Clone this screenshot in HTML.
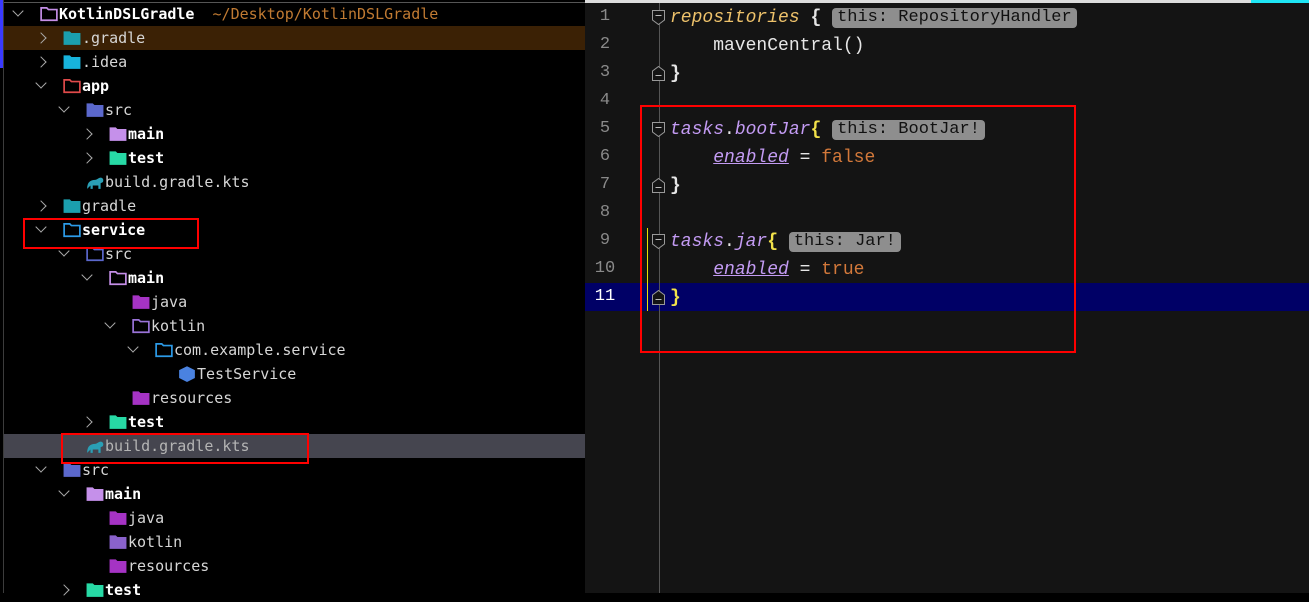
<!DOCTYPE html>
<html><head><meta charset="utf-8"><style>
*{margin:0;padding:0;box-sizing:border-box}
body{width:1309px;height:593px;overflow:hidden;background:#000;position:relative;font-family:"DejaVu Sans Mono","Liberation Mono",monospace}
.row{position:absolute;left:4px;width:581px;height:24px;font-size:15px;line-height:24px;color:#d6d6d6;white-space:nowrap}
.row .t{position:absolute;top:0}
.row b{font-weight:bold;color:#fff}
.chev{position:absolute;top:8px;width:8px;height:8px;border-right:1.7px solid #aaa;border-bottom:1.7px solid #aaa}
.chev.d{transform:rotate(45deg);top:5px}
.chev.r{transform:rotate(-45deg)}
.ic{position:absolute;top:3px;width:18px;height:17px}
#ed{position:absolute;left:585px;top:0;width:724px;height:593px;background:#141414;font-family:"Liberation Mono",monospace;font-size:18px}
.ln{position:absolute;left:0;width:40px;text-align:center;color:#8a8a8a;height:28px;line-height:28px;font-size:17px}
.code{position:absolute;left:85px;height:28px;line-height:28px;color:#e6e6e6;white-space:pre}
.hint{display:inline-block;background:#8e8e8e;color:#111 !important;border-radius:4px;line-height:20px;padding:0 5px;font-style:normal;font-weight:normal;font-size:17px;vertical-align:1px}
.pu{color:#c39bf3;font-style:italic}
.or{color:#d2783a}
.ye{color:#f2e24a;font-weight:bold}
.fold{position:absolute;left:67px;width:13px;height:15px}
.red{position:absolute;border:2px solid #f00}
</style></head><body>
<div style="position:absolute;left:0;top:0;width:3px;height:68px;background:#3a3aff"></div>
<div style="position:absolute;left:3px;top:0;width:1px;height:593px;background:#3c3c3c"></div>
<div style="position:absolute;left:4px;top:2px;width:581px;height:1px;background:#555"></div>
<div style="position:absolute;left:4px;top:26px;width:581px;height:24px;background:#3b2105"></div>
<div style="position:absolute;left:4px;top:434px;width:581px;height:24px;background:#45454f"></div>
<div id="rows"></div>
<div class="red" style="left:23px;top:218px;width:176px;height:31px"></div>
<div class="red" style="left:61px;top:433px;width:248px;height:31px"></div>

<div id="ed">
<div style="position:absolute;left:0;top:0;width:666px;height:3px;background:#ddd"></div>
<div style="position:absolute;left:666px;top:0;width:58px;height:3px;background:#1ee6f5"></div>
<div style="position:absolute;left:0;top:283px;width:724px;height:28px;background:#000066"></div>
<div style="position:absolute;left:74px;top:3px;width:1px;height:590px;background:#555"></div>
<div style="position:absolute;left:62px;top:228px;width:1px;height:83px;background:#e8e000"></div>
<div class="ln" style="top:3px">1</div><div class="ln" style="top:31px">2</div><div class="ln" style="top:59px">3</div><div class="ln" style="top:87px">4</div><div class="ln" style="top:115px">5</div><div class="ln" style="top:143px">6</div><div class="ln" style="top:171px">7</div><div class="ln" style="top:199px">8</div><div class="ln" style="top:227px">9</div><div class="ln" style="top:255px">10</div><div class="ln" style="top:283px;color:#fff">11</div>
<div class="code" style="top:4px"><span style="color:#eec26b;font-style:italic">repositories</span> <b>{</b> <span class="hint">this: RepositoryHandler</span></div>
<div class="code" style="top:32px">    mavenCentral()</div>
<div class="code" style="top:60px"><b>}</b></div>
<div class="code" style="top:116px"><span class="pu">tasks</span>.<span class="pu">bootJar</span><span class="ye">{</span> <span class="hint">this: BootJar!</span></div>
<div class="code" style="top:144px">    <span class="pu" style="text-decoration:underline">enabled</span> = <span class="or">false</span></div>
<div class="code" style="top:172px"><b>}</b></div>
<div class="code" style="top:228px"><span class="pu">tasks</span>.<span class="pu">jar</span><span class="ye">{</span> <span class="hint">this: Jar!</span></div>
<div class="code" style="top:256px">    <span class="pu" style="text-decoration:underline">enabled</span> = <span class="or">true</span></div>
<div class="code" style="top:284px"><span class="ye">}</span></div>
<svg class="fold" style="top:10px" viewBox="0 0 13 15"><path d="M0.5 .5H12.5V10L6.5 14.5L.5 10Z" fill="#141414" stroke="#999"/><path d="M3.5 5.5H9.5" stroke="#bbb"/></svg>
<svg class="fold" style="top:122px" viewBox="0 0 13 15"><path d="M0.5 .5H12.5V10L6.5 14.5L.5 10Z" fill="#141414" stroke="#999"/><path d="M3.5 5.5H9.5" stroke="#bbb"/></svg>
<svg class="fold" style="top:234px" viewBox="0 0 13 15"><path d="M0.5 .5H12.5V10L6.5 14.5L.5 10Z" fill="#141414" stroke="#999"/><path d="M3.5 5.5H9.5" stroke="#bbb"/></svg>
<svg class="fold" style="top:66px" viewBox="0 0 13 15"><path d="M0.5 14.5H12.5V5L6.5 .5L.5 5Z" fill="#141414" stroke="#999"/><path d="M3.5 9.5H9.5" stroke="#bbb"/></svg>
<svg class="fold" style="top:178px" viewBox="0 0 13 15"><path d="M0.5 14.5H12.5V5L6.5 .5L.5 5Z" fill="#141414" stroke="#999"/><path d="M3.5 9.5H9.5" stroke="#bbb"/></svg>
<svg class="fold" style="top:290px" viewBox="0 0 13 15"><path d="M0.5 14.5H12.5V5L6.5 .5L.5 5Z" fill="#141414" stroke="#999"/><path d="M3.5 9.5H9.5" stroke="#bbb"/></svg>
</div>
<div class="red" style="left:640px;top:105px;width:436px;height:248px"></div>
<script>
var items=[
[0,'d','o','#c58fe8','KotlinDSLGradle',1],
[1,'r','f','#1b9fae','.gradle',0],
[1,'r','f','#17b3dc','.idea',0],
[1,'d','o','#e04a4a','app',1],
[2,'d','f','#5b68cc','src',0],
[3,'r','f','#c590ea','main',1],
[3,'r','f','#27d9a5','test',1],
[2,'','e','#2a9fb5','build.gradle.kts',0],
[1,'r','f','#1b9fae','gradle',0],
[1,'d','o','#2c9be8','service',1],
[2,'d','o','#5b68cc','src',0],
[3,'d','o','#c58fe8','main',1],
[4,'','f','#a533c4','java',0],
[4,'d','o','#9a73d8','kotlin',0],
[5,'d','o','#2c9be8','com.example.service',0],
[6,'','c','#4a82e0','TestService',0],
[4,'','f','#a533c4','resources',0],
[3,'r','f','#27d9a5','test',1],
[2,'','e','#2a9fb5','build.gradle.kts',0],
[1,'d','f','#5b68cc','src',0],
[2,'d','f','#c590ea','main',1],
[3,'','f','#a533c4','java',0],
[3,'','f','#8a62cc','kotlin',0],
[3,'','f','#a533c4','resources',0],
[2,'r','f','#27d9a5','test',1]];
var h='';
items.forEach(function(it,i){
 var L=it[0],top=2+24*i,tx=55+23*L,ix=tx-19,cx=10+23*L;
 h+='<div class="row" style="top:'+top+'px">';
 if(it[1])h+='<div class="chev '+it[1]+'" style="left:'+cx+'px"></div>';
 var c=it[3],svg;
 if(it[2]=='o')svg='<path d="M1 2.5H6L7.5 4H15V13.5H1Z" fill="none" stroke="'+c+'" stroke-width="1.5"/>';
 else if(it[2]=='f')svg='<path d="M0.5 2H6L7.5 3.5H15.5V14H0.5Z" fill="'+c+'"/>';
 else if(it[2]=='e')svg='<path d="M1 14C1 8 4 6 8 6C10 6 11 4 13 4C15 4 16 6 15 8L13 9V14H11V11H6V14H4V11Z" fill="'+c+'"/>';
 else svg='<path d="M8 1L15 4.5V11.5L8 15L1 11.5V4.5Z" fill="'+c+'"/>';
 h+='<svg class="ic" style="left:'+ix+'px" viewBox="0 0 16 15">'+svg+'</svg>';
 var txt=it[5]?'<b>'+it[4]+'</b>':it[4];
 if(i==18)txt='<span style="color:#b4b4b4">'+it[4]+'</span>';
 if(i==0)txt+='&nbsp;&nbsp;<span style="color:#c07a32">~/Desktop/KotlinDSLGradle</span>';
 h+='<span class="t" style="left:'+tx+'px">'+txt+'</span></div>';
});
document.getElementById('rows').innerHTML=h;
</script>
</body></html>
